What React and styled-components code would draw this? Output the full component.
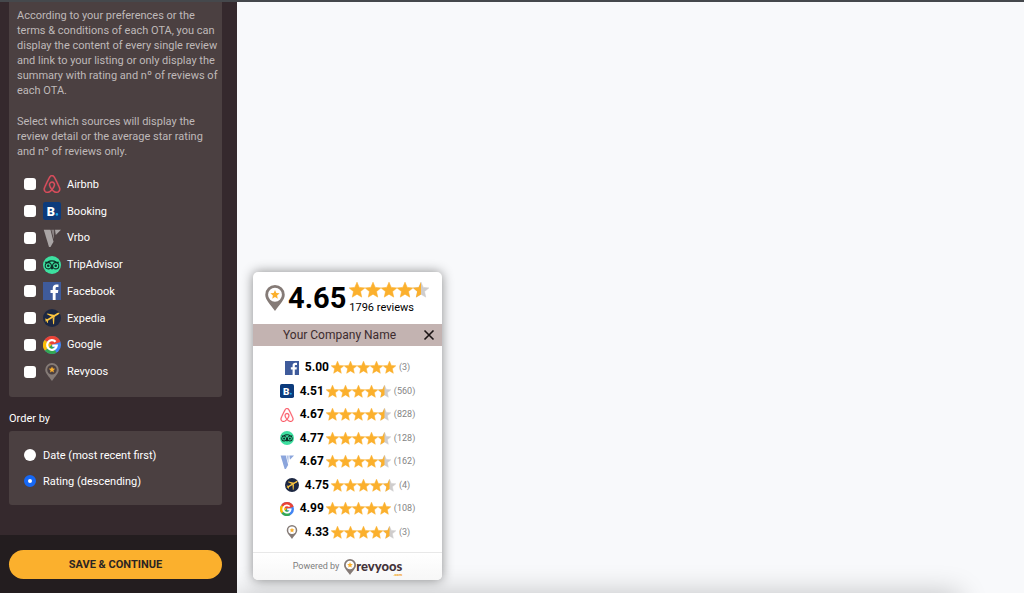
import React from "react";
import styled, { createGlobalStyle } from "styled-components";
import { SiAirbnb, SiTripadvisor } from "react-icons/si";

const GlobalStyle = createGlobalStyle`
  *, *::before, *::after { box-sizing: border-box; }
  body {
    margin: 0;
    font-family: Roboto, "Liberation Sans", sans-serif;
    font-size: 11px;
    line-height: 15px;
    color: #fff;
    background: #f8f9fb;
  }
  p, ul { margin: 0; padding: 0; }
  ul { list-style: none; }
`;

const Page = styled.div`
  display: flex;
  min-height: 100vh;
  border-top: 2px solid #45484c;
`;

const Sidebar = styled.aside`
  display: flex;
  flex-direction: column;
  flex: none;
  width: 237px;
  background: #35292d;
`;

const Settings = styled.div`
  padding: 0 15px 30px 9px;
`;

const Panel = styled.section`
  padding: ${(p) => (p.$compact ? "11px 15px" : "6px 2px 12px 8px")};
  background: #4b4041;
  border-radius: ${(p) => (p.$compact ? "3px" : "0 0 3px 3px")};
`;

const Help = styled.p`
  color: #bfb9b9;
  & + & { margin-top: 16px; }
`;

const SourceList = styled.ul`
  display: grid;
  grid-auto-rows: 1fr;
  height: 214px;
  margin-top: 12px;
  padding-left: 7px;
`;

const Option = styled.label`
  display: flex;
  align-items: center;
  height: ${(p) => (p.$tall ? "26px" : "100%")};
  font-size: 11px;
`;

const Tick = styled.input`
  appearance: none;
  flex: none;
  width: 12px;
  height: 12px;
  margin: 0 7px 0 0;
  background: #fff;
  border-radius: 3px;
  &:checked { border: 4px solid #1668f5; }
`;

const Radio = styled(Tick)`
  border-radius: 50%;
`;

const OptionIcon = styled.span`
  display: flex;
  width: 18px;
  height: 18px;
  margin-right: 6px;
`;

const GroupTitle = styled.h2`
  margin: 14px 0 5px;
  font-size: 11px;
  line-height: 15px;
  font-weight: 400;
`;

const SaveBar = styled.div`
  margin-top: auto;
  padding: 15px 15px 14px 9px;
  background: #231d1f;
`;

const SaveButton = styled.button`
  display: block;
  width: 100%;
  height: 29px;
  padding: 0;
  border: 0;
  border-radius: 15px;
  background: #fbb02d;
  color: #2b2523;
  font: 700 11px/15px Roboto, sans-serif;
`;

const Preview = styled.main`
  position: relative;
  display: flex;
  align-items: flex-end;
  flex: 1;
  padding: 13px 16px;
  overflow: hidden;
  &::after {
    content: "";
    position: absolute;
    top: 100%;
    left: 0;
    right: 64px;
    height: 40px;
    box-shadow: 0 0 28px rgba(0, 0, 0, 0.22);
  }
`;

const Widget = styled.article`
  position: relative;
  z-index: 1;
  width: 189px;
  overflow: hidden;
  border-radius: 5px;
  background: #fff;
  color: #000;
  box-shadow: 0 0 12px rgba(0, 0, 0, 0.45);
`;

const Summary = styled.header`
  display: flex;
  align-items: center;
  height: 52px;
  padding-left: 12px;
`;

const Score = styled.strong`
  margin: 0 3px 0 3px;
  font-size: 29px;
  line-height: 32px;
`;

const SummaryDetail = styled.div`
  display: grid;
  gap: 2px;
`;

const NameBar = styled.div`
  display: grid;
  grid-template-columns: 1fr 14px;
  align-items: center;
  height: 22px;
  padding: 0 6px 0 4px;
  background: #c3b3b1;
  color: #3d2c2f;
  font-size: 12px;
  text-align: center;
`;

const CloseButton = styled.button`
  display: flex;
  padding: 1px;
  border: 0;
  background: none;
  color: #1b1415;
`;

const RatingList = styled.ul`
  display: grid;
  grid-auto-rows: 1fr;
  height: 206px;
  padding: 10px 0 8px;
`;

const RatingRow = styled.li`
  display: flex;
  align-items: center;
  justify-content: center;
`;

const RowIcon = styled.span`
  display: flex;
  width: 14px;
  height: 14px;
  margin-right: 6px;
`;

const Value = styled.strong`
  margin-right: 2px;
  font-size: 12px;
`;

const Count = styled.span`
  margin-left: 3px;
  color: #858585;
  font-size: 9px;
`;

const Powered = styled.footer`
  display: flex;
  align-items: center;
  justify-content: center;
  gap: 5px;
  height: 28px;
  border-top: 1px solid #e8e8e8;
  background: linear-gradient(#fff, #f7f7f7);
  color: #7d7d7d;
  font-size: 9px;
`;

const Brand = styled.a`
  display: flex;
  align-items: center;
  color: #44343a;
  text-decoration: none;
`;

const BrandName = styled.span`
  display: flex;
  flex-direction: column;
  align-items: flex-end;
  padding-top: 4px;
  font: 900 13px/13px Lato, sans-serif;
`;

const BrandSuffix = styled.small`
  color: #f5a623;
  font: 700 4px/4px Roboto, sans-serif;
`;

const STAR = "M8 .2l2.200 5.200 5.600.5-4.300 3.700 1.200 5.500L8 12.200l-4.700 2.900 1.200-5.500L.2 5.900l5.600-.5z";

function Stars({ value, size }) {
  return (
    <svg width={size * 5} height={size} viewBox="0 0 80 16" role="img" aria-label={`${value} stars`}>
      {[0, 1, 2, 3, 4].map((i) => {
        const half = value === i + 0.5;
        const color = value >= i + 1 ? "#fbb02d" : "#cfcdcd";
        return (
          <g key={i} transform={`translate(${i * 16} 0)`}>
            <path d={STAR} fill={color} stroke={color} strokeWidth=".6" />
            {half && <path d="M8 0v12.400l-5.100 3.200 1.300-6L-.2 5.700l5.800-.5z" fill="#fbb02d" />}
          </g>
        );
      })}
    </svg>
  );
}

function Pin({ width, height, color = "#857b77" }) {
  return (
    <svg width={width} height={height} viewBox="0 0 18 24" aria-hidden="true">
      <path
        fillRule="evenodd"
        fill={color}
        d="M9 0a9 9 0 0 1 9 9c0 5-5 9-9 15C5 18 0 14 0 9a9 9 0 0 1 9-9zm0 2.600a6.400 6.400 0 1 0 0 12.800A6.400 6.400 0 0 0 9 2.600z"
      />
      <path transform="translate(4.600 4.400) scale(.55)" d={STAR} fill="#fbb02d" />
    </svg>
  );
}

function BrandIcon({ name, muted }) {
  const box = { width: "100%", height: "100%", viewBox: "0 0 24 24", "aria-hidden": true };
  switch (name) {
    case "Airbnb":
      return (
        <SiAirbnb
          size="100%"
          color={muted ? "#e04f5f" : "#fb5c68"}
          stroke="currentColor"
          strokeWidth=".5"
          aria-hidden="true"
        />
      );
    case "Booking":
      return (
        <svg {...box}>
          <rect width="24" height="24" rx="3" fill="#0c3b7c" />
          <text x="5" y="18" fontFamily="Roboto" fontWeight="900" fontSize="17" fill="#fff">B</text>
          <circle cx="18.500" cy="16.500" r="1.700" fill="#1ba6e8" />
        </svg>
      );
    case "Vrbo":
      return (
        <svg {...box} fill={muted ? "#aaa5a5" : "#8ba5dc"}>
          <path d="M1 1h9l4 16-4 7h-2z" />
          <path d="M11 1h4l-.5 13z" opacity=".65" />
          <path d="M16 1h8l-2 2-5 5z" />
        </svg>
      );
    case "TripAdvisor":
      return (
        <svg {...box}>
          <circle cx="12" cy="12" r="12" fill="#3de0a0" />
          <SiTripadvisor x="2" y="2" size="20" color="#0e2f27" />
        </svg>
      );
    case "Facebook":
      return (
        <svg {...box}>
          <rect width="24" height="24" fill="#3f5b9b" />
          <path fill="#fff" d="M13 24v-9.500h-3V10.700h3V8c0-3.200 2-4.800 4.800-4.800 1.300 0 2.500.1 2.800.2v3.400h-2c-1.500 0-1.800.8-1.800 1.900v2h3.600l-.5 3.800h-3.100V24z" />
        </svg>
      );
    case "Expedia":
      return (
        <svg {...box}>
          <circle cx="12" cy="12" r="12" fill="#1c2742" />
          <g fill="#f9c440">
            <path d="M21.800 5.300c.3.700-.4 1.300-1.300 1.900L6.600 15.700l-3.200 1-.5-1 2.600-2L19 5.400c1.200-.6 2.400-.8 2.800-.1z" />
            <path d="M4.800 6.800l1.300-.7 9.500 2 .4 2-2.500 1.200z" />
            <path d="M12.800 11.800l2.600-1.600-.6 9.600-1.300.8z" />
            <path d="M2.600 13.300l1-.5 3.300 1.500-.4 3.900-1 .6-.8-3.200z" />
          </g>
        </svg>
      );
    case "Google":
      return (
        <svg {...box}>
          <circle cx="12" cy="12" r="12" fill="#4285f4" />
          <path fill="#ea4335" d="M12 12L2 5.400A12 12 0 0 1 23.300 8z" />
          <path fill="#fbbc05" d="M12 12L2.600 19.500A12 12 0 0 1 2 5.400z" />
          <path fill="#34a853" d="M12 12l6 10.400A12 12 0 0 1 2.600 19.500z" />
          <path fill="none" stroke="#fff" strokeWidth="3" d="M16.700 7.700A6.400 6.400 0 1 0 18.300 12.700H12.300" />
        </svg>
      );
    default:
      return <Pin width="100%" height="100%" />;
  }
}

const SOURCES = ["Airbnb", "Booking", "Vrbo", "TripAdvisor", "Facebook", "Expedia", "Google", "Revyoos"];

const RATINGS = [
  { source: "Facebook", value: "5.00", stars: 5, count: 3 },
  { source: "Booking", value: "4.51", stars: 4.5, count: 560 },
  { source: "Airbnb", value: "4.67", stars: 4.5, count: 828 },
  { source: "TripAdvisor", value: "4.77", stars: 4.5, count: 128 },
  { source: "Vrbo", value: "4.67", stars: 4.5, count: 162 },
  { source: "Expedia", value: "4.75", stars: 4.5, count: 4 },
  { source: "Google", value: "4.99", stars: 5, count: 108 },
  { source: "Revyoos", value: "4.33", stars: 4.5, count: 3 },
];

export default function App() {
  return (
    <>
      <GlobalStyle />
      <Page>
        <Sidebar>
          <Settings>
            <Panel>
              <Help>
                According to your preferences or the terms &amp; conditions of each OTA, you can display
                the content of every single review and link to your listing or only display the summary
                with rating and nº of reviews of each OTA.
              </Help>
              <Help>
                Select which sources will display the review detail or the average star rating and nº of
                reviews only.
              </Help>
              <SourceList>
                {SOURCES.map((name) => (
                  <li key={name}>
                    <Option>
                      <Tick type="checkbox" name="sources" value={name} />
                      <OptionIcon><BrandIcon name={name} muted /></OptionIcon>
                      {name}
                    </Option>
                  </li>
                ))}
              </SourceList>
            </Panel>
            <GroupTitle id="order-title">Order by</GroupTitle>
            <Panel $compact role="radiogroup" aria-labelledby="order-title">
              <Option $tall>
                <Radio type="radio" name="order" value="date" />
                Date (most recent first)
              </Option>
              <Option $tall>
                <Radio type="radio" name="order" value="rating" defaultChecked />
                Rating (descending)
              </Option>
            </Panel>
          </Settings>
          <SaveBar>
            <SaveButton type="button">SAVE &amp; CONTINUE</SaveButton>
          </SaveBar>
        </Sidebar>
        <Preview>
          <Widget>
            <Summary>
              <Pin width={20} height={26} />
              <Score>4.65</Score>
              <SummaryDetail>
                <Stars value={4.5} size={16} />
                1796 reviews
              </SummaryDetail>
            </Summary>
            <NameBar>
              Your Company Name
              <CloseButton type="button" aria-label="Close">
                <svg width="12" height="12" viewBox="0 0 12 12" fill="none" stroke="currentColor" strokeWidth="1.600">
                  <path d="M1.500 1.500l9 9M10.500 1.500l-9 9" />
                </svg>
              </CloseButton>
            </NameBar>
            <RatingList>
              {RATINGS.map((r) => (
                <RatingRow key={r.source}>
                  <RowIcon><BrandIcon name={r.source} /></RowIcon>
                  <Value>{r.value}</Value>
                  <Stars value={r.stars} size={13} />
                  <Count>({r.count})</Count>
                </RatingRow>
              ))}
            </RatingList>
            <Powered>
              Powered by
              <Brand href="#revyoos">
                <Pin width={12} height={16} />
                <BrandName>
                  revyoos
                  <BrandSuffix>.com</BrandSuffix>
                </BrandName>
              </Brand>
            </Powered>
          </Widget>
        </Preview>
      </Page>
    </>
  );
}
